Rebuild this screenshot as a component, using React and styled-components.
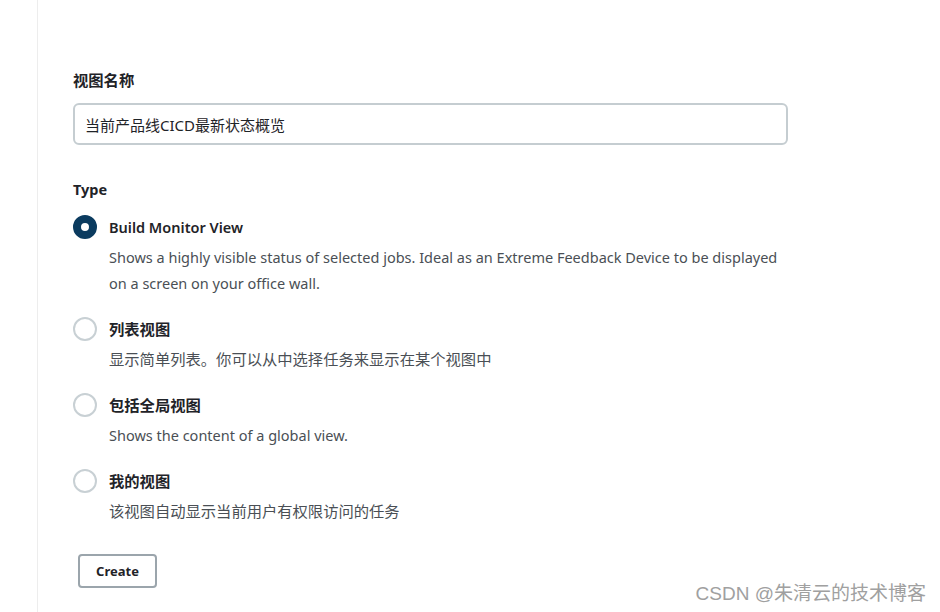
import React, { useState } from "react";
import styled, { createGlobalStyle } from "styled-components";

const GlobalStyle = createGlobalStyle`
  html, body {
    margin: 0;
    padding: 0;
    background: #fff;
  }
  body {
    font-family: "Noto Sans", "Noto Sans CJK SC", sans-serif;
    color: #1f2328;
  }
`;

const types = [
  {
    id: "monitor",
    lang: "en",
    name: "Build Monitor View",
    desc: "Shows a highly visible status of selected jobs. Ideal as an Extreme Feedback Device to be displayed on a screen on your office wall.",
  },
  { id: "list", lang: "zh", name: "列表视图", desc: "显示简单列表。你可以从中选择任务来显示在某个视图中" },
  { id: "global", lang: "zh", name: "包括全局视图", desc: "Shows the content of a global view." },
  { id: "my", lang: "zh", name: "我的视图", desc: "该视图自动显示当前用户有权限访问的任务" },
];

const isCjk = (s) => /[\u4e00-\u9fff]/.test(s);

const App = () => {
  const [name, setName] = useState("当前产品线CICD最新状态概览");
  const [selected, setSelected] = useState("monitor");

  return (
    <Page>
      <GlobalStyle />
      <Side />
      <Main>
        <Label>视图名称</Label>
        <NameInput value={name} onChange={(e) => setName(e.target.value)} />
        <TypeLabel>Type</TypeLabel>
        <Options>
          {types.map((t) => (
            <Option key={t.id} onClick={() => setSelected(t.id)}>
              <Radio $checked={selected === t.id} />
              <OptionName $cjk={isCjk(t.name)}>{t.name}</OptionName>
              <OptionDesc $cjk={isCjk(t.desc)}>{t.desc}</OptionDesc>
            </Option>
          ))}
        </Options>
        <CreateButton>Create</CreateButton>
      </Main>
      <Watermark>CSDN @朱清云的技术博客</Watermark>
    </Page>
  );
};

export default App;

const Page = styled.div`
  position: relative;
  display: flex;
  width: 940px;
  height: 612px;
  overflow: hidden;
`;

const Side = styled.div`
  width: 37px;
  flex-shrink: 0;
  border-right: 1px solid #ededed;
`;

const Main = styled.div`
  padding: 70px 0 0 35px;
  display: flex;
  flex-direction: column;
  align-items: flex-start;
`;

const Label = styled.div`
  font-size: 15.3px;
  font-weight: 700;
  line-height: 20px;
  color: #1f2328;
`;

const NameInput = styled.input`
  box-sizing: border-box;
  margin-top: 13px;
  width: 715px;
  height: 42px;
  padding: 0 10px;
  border: 2px solid #c5cdd1;
  border-radius: 6px;
  font-family: "Noto Sans", "Noto Sans CJK SC", sans-serif;
  font-size: 15px;
  color: #1f2328;
  outline: none;
`;

const TypeLabel = styled(Label)`
  margin-top: 34px;
  font-size: 14.5px;
`;

const Options = styled.div`
  margin-top: 16px;
  display: flex;
  flex-direction: column;
  gap: 21px;
`;

const Option = styled.div`
  display: grid;
  grid-template-columns: 24px 1fr;
  column-gap: 12px;
  cursor: pointer;
`;

const Radio = styled.span`
  box-sizing: border-box;
  width: 24px;
  height: 24px;
  border-radius: 50%;
  border: ${(p) => (p.$checked ? "8px solid #0b3b5f" : "2px solid #c8d0d4")};
  background: #fff;
`;

const OptionName = styled.div`
  font-size: ${(p) => (p.$cjk ? "15.3px" : "14.5px")};
  font-weight: 600;
  line-height: 24px;
  color: #1f2328;
`;

const OptionDesc = styled.div`
  grid-column: 2;
  width: 680px;
  margin-top: 5px;
  font-size: ${(p) => (p.$cjk ? "15.3px" : "14.5px")};
  line-height: 26px;
  color: #4a4f55;
`;

const CreateButton = styled.button`
  margin: 30px 0 0 5px;
  width: 79px;
  height: 34px;
  border: 2px solid #9ba5ac;
  border-radius: 4px;
  background: #fff;
  font-family: "Noto Sans", "Noto Sans CJK SC", sans-serif;
  font-size: 13px;
  font-weight: 700;
  color: #1f2328;
  cursor: pointer;
`;

const Watermark = styled.div`
  position: absolute;
  right: 14px;
  bottom: 7px;
  font-family: "Liberation Sans", "Noto Sans CJK SC", sans-serif;
  font-size: 19px;
  color: #a0a0a0;
`;
